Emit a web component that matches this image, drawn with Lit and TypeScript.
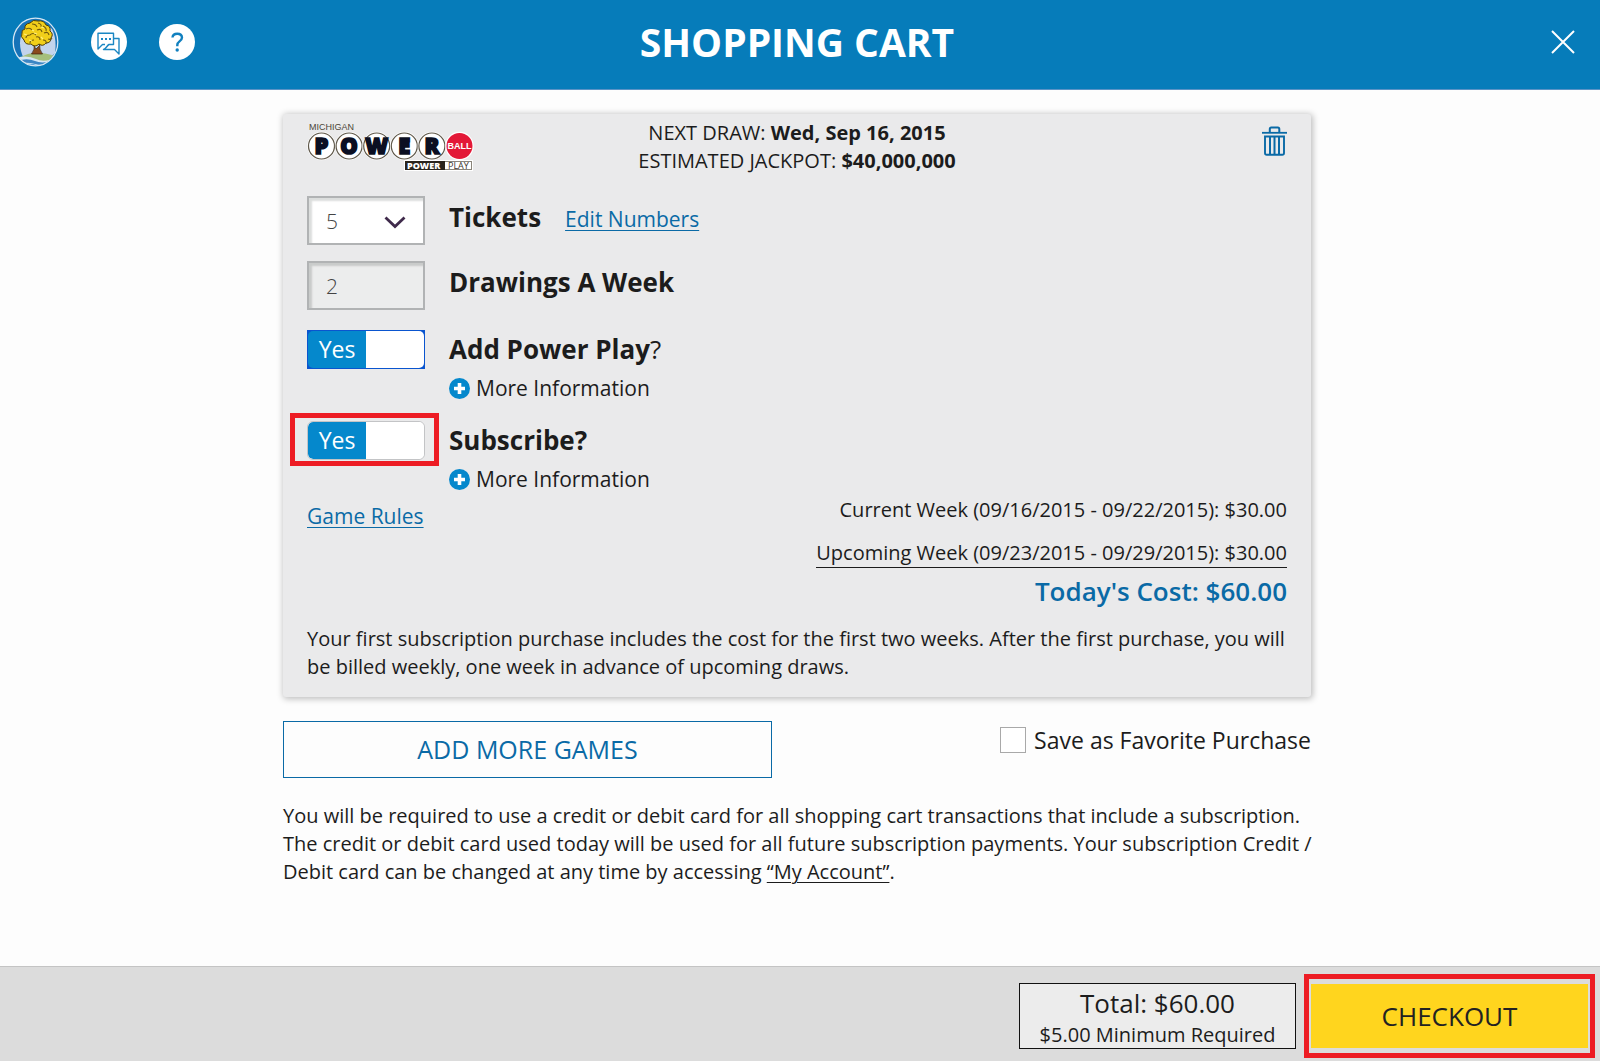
import { LitElement, html, css, svg } from "lit";
import { customElement, property, state } from "lit/decorators.js";
import { classMap } from "lit/directives/class-map.js";

/** Yes/No switch drawn as a two-part slider. */
@customElement("yes-toggle")
class YesToggle extends LitElement {
  @property() label = "";
  @property({ type: Boolean }) checked = true;
  @property({ type: Boolean }) focused = false;

  static styles = css`
    :host {
      display: block;
    }
    .toggle {
      position: relative;
      display: flex;
      box-sizing: border-box;
      height: 39px;
      border: 1px solid #c3c4c6;
      border-radius: 6px;
      background: #fff;
      overflow: hidden;
      cursor: pointer;
    }
    .toggle.focused {
      border-radius: 0;
      border-color: #0a55cf;
      background: #0a55cf;
    }
    .input {
      position: absolute;
      inset: 0;
      width: 100%;
      height: 100%;
      margin: 0;
      opacity: 0;
      cursor: pointer;
    }
    .side {
      flex: 1;
      text-align: center;
      font-size: 23px;
      line-height: 36px;
      background: #fff;
      border-radius: 0 5px 5px 0;
    }
    .side.on {
      background: #0588cc;
      color: #fff;
      border-radius: 5px 0 0 5px;
    }
  `;

  private flip(e: Event) {
    this.checked = (e.target as HTMLInputElement).checked;
  }

  render() {
    return html`
      <label class=${classMap({ toggle: true, focused: this.focused })}>
        <input class="input" type="checkbox" role="switch" aria-label=${this.label} .checked=${this.checked} @change=${this.flip} />
        <span class=${classMap({ side: true, on: this.checked })}>${this.checked ? "Yes" : ""}</span>
        <span class="side">${this.checked ? "" : "No"}</span>
      </label>
    `;
  }
}

/** Powerball game logo: five lettered balls, a red one and the Power Play strip. */
@customElement("powerball-logo")
class PowerballLogo extends LitElement {
  static styles = css`
    :host {
      display: block;
      line-height: 0;
    }
    .letter {
      font: 800 22px "Open Sans", sans-serif;
      fill: #0b0f22;
      stroke: #0b0f22;
      stroke-width: 1.6;
      text-anchor: middle;
    }
    .ball {
      font: bold 9px "Liberation Sans", sans-serif;
      fill: #fff;
      text-anchor: middle;
    }
    .state {
      font: 9px "Liberation Sans", sans-serif;
      fill: #4c4638;
    }
    .power {
      font: 800 9px "Open Sans", sans-serif;
      fill: #fff;
    }
    .play {
      font: 9px "Open Sans", sans-serif;
      fill: #3a352b;
    }
  `;

  render() {
    return html`
      <svg width="168" height="50" viewBox="0 0 168 50" role="img" aria-label="Michigan Powerball Power Play">
        <text class="state" x="2" y="8">MICHIGAN</text>
        ${["P", "O", "W", "E", "R"].map((c, i) => {
          const x = 14.5 + i * 27.6;
          return svg`
            <circle cx=${x} cy="24" r="14.2" fill="#fff"/>
            <circle cx=${x} cy="24" r="13" fill="#fff" stroke="#5f584a" stroke-width="1.2"/>
            <text class="letter" x=${x} y="32">${c}</text>`;
        })}
        <circle cx="152.5" cy="24" r="14.2" fill="#fff" />
        <circle cx="152.5" cy="24" r="13" fill="#e31837" />
        <text class="ball" x="152.5" y="27">BALL</text>
        <rect x="97" y="38" width="69" height="11" fill="#fff" />
        <rect x="98" y="39" width="67" height="9" fill="#8a857a" />
        <rect x="98" y="39" width="40" height="9" fill="#2a241c" />
        <rect x="138" y="40" width="26" height="7" fill="#fff" />
        <text class="power" x="100" y="47">POWER</text>
        <text class="play" x="141" y="47">PLAY</text>
      </svg>
    `;
  }
}

@customElement("app-root")
class AppRoot extends LitElement {
  @state() private tickets = "5";

  static styles = css`
    :host {
      display: flex;
      flex-direction: column;
      min-height: 100vh;
      background: #fdfdfd;
      color: #1c1c1c;
      font-family: "Open Sans", "Noto Sans", sans-serif;
      font-size: 20px;
      line-height: 28px;
    }
    button {
      font-family: inherit;
      cursor: pointer;
    }
    a {
      color: #0a6aa6;
      text-decoration-thickness: 1px;
      text-underline-offset: 3px;
    }
    p {
      margin: 0;
    }
    svg {
      display: block;
    }

    .topbar {
      display: grid;
      grid-template-columns: 1fr auto 1fr;
      align-items: center;
      box-sizing: border-box;
      height: 90px;
      padding: 0 18px 6px 12px;
      background: #067cba;
      border-bottom: 1px solid #5a93c6;
    }
    .nav {
      display: flex;
      align-items: center;
      gap: 32px;
    }
    .title {
      margin: 0;
      color: #fff;
      font-size: 39px;
      line-height: 48px;
      font-weight: 700;
    }
    .close {
      justify-self: end;
      padding: 6px;
      border: 0;
      background: none;
    }

    .page {
      flex: 1;
      box-sizing: border-box;
      width: 100%;
      max-width: 1076px;
      margin: 0 auto;
      padding: 24px 27px 24px 21px;
    }
    .card {
      padding: 5px 24px 16px;
      background: #eaeaeb;
      border-radius: 3px;
      box-shadow: 1px 1px 6px 1px rgba(0, 0, 0, 0.25);
    }
    .card-head {
      display: grid;
      grid-template-columns: 1fr auto 1fr;
      align-items: start;
      margin-bottom: 21px;
    }
    .logo {
      padding-top: 3px;
    }
    .draw {
      text-align: center;
    }
    .trash {
      justify-self: end;
      margin-top: 7px;
      padding: 0;
      border: 0;
      background: none;
    }

    .row {
      display: grid;
      grid-template-columns: 118px 1fr;
      column-gap: 24px;
      align-items: start;
      margin-bottom: 16px;
    }
    .row.option {
      margin: 20px 0;
    }
    .row.last {
      margin: 19px 0 3px;
    }
    .row.first-option {
      margin-bottom: 19px;
    }
    .name {
      font-size: 26px;
      line-height: 42px;
      font-weight: 700;
    }
    .option .name {
      line-height: 39px;
    }
    .plain {
      font-weight: 400;
    }
    .named {
      display: flex;
      align-items: baseline;
      gap: 24px;
    }
    .link {
      font-size: 21px;
    }
    .select-box {
      position: relative;
    }
    .field {
      box-sizing: border-box;
      display: block;
      width: 100%;
      height: 49px;
      padding: 0 17px;
      border: 2px solid #b1b3b4;
      border-radius: 0;
      background: #fff;
      box-shadow: inset 3px 3px 2px #dcdedd;
      color: #444;
      font-family: inherit;
      font-size: 21px;
      font-weight: 300;
      appearance: none;
    }
    .field.fixed {
      background: #eceded;
      box-shadow: inset 3px 3px 2px #c9cbca;
    }
    .chevron {
      position: absolute;
      right: 19px;
      top: 20px;
      pointer-events: none;
    }
    .more {
      display: flex;
      align-items: center;
      gap: 6px;
      padding: 0;
      margin-top: 5px;
      border: 0;
      background: none;
      color: inherit;
      font-size: 21px;
      line-height: 28px;
    }
    .marked {
      position: relative;
    }
    .marked::after {
      content: "";
      position: absolute;
      inset: -8px -14px -6px -17px;
      border: 5px solid #ed1c24;
      pointer-events: none;
    }

    .summary {
      display: flex;
      justify-content: space-between;
      align-items: start;
      margin-bottom: 16px;
    }
    .summary .link {
      margin-top: 6px;
    }
    .costs {
      display: flex;
      flex-direction: column;
      align-items: flex-end;
    }
    .upcoming {
      margin-top: 15px;
      border-bottom: 1px solid #1c1c1c;
    }
    .today {
      margin-top: 5px;
      color: #0a6aa6;
      font-size: 26px;
      line-height: 36px;
      font-weight: 600;
    }

    .actions {
      display: flex;
      justify-content: space-between;
      align-items: start;
      margin: 24px 0;
    }
    .add {
      box-sizing: border-box;
      width: calc(50% - 25px);
      height: 57px;
      padding: 0 0 2px;
      border: 1px solid #0a6aa6;
      background: none;
      color: #0a6aa6;
      font-size: 25px;
    }
    .favorite {
      display: flex;
      align-items: center;
      gap: 8px;
      margin-top: 4px;
      font-size: 23px;
      line-height: 30px;
    }
    .check {
      box-sizing: border-box;
      width: 26px;
      height: 26px;
      margin: 0;
      border: 1px solid #a9a9a9;
      background: #fff;
      appearance: none;
    }
    .notice {
      margin-right: -12px;
    }
    .account {
      color: inherit;
    }

    .footer {
      display: flex;
      justify-content: flex-end;
      align-items: center;
      gap: 8px;
      box-sizing: border-box;
      height: 95px;
      padding: 4px 5px 0;
      background: #dcdcdc;
      border-top: 1px solid #c4c4c4;
    }
    .total {
      box-sizing: border-box;
      width: 277px;
      height: 66px;
      border: 1px solid #111;
      background: #ececec;
      text-align: center;
      line-height: 26px;
    }
    .sum {
      font-size: 26px;
      line-height: 38px;
    }
    .pay {
      box-sizing: border-box;
      width: 291px;
      height: 84px;
      padding: 5px 2px;
      border: 5px solid #ed1c24;
    }
    .checkout {
      width: 100%;
      height: 100%;
      padding: 0;
      border: 0;
      background: #ffd51e;
      color: #222;
      font-size: 26px;
    }
  `;

  private onTickets(e: Event) {
    this.tickets = (e.target as HTMLSelectElement).value;
  }

  private moreInfo() {
    return html`
      <button class="more" type="button">
        <svg width="21" height="21" viewBox="0 0 21 21" aria-hidden="true">
          <circle cx="10.5" cy="10.5" r="10.5" fill="#0588cc" />
          <path d="M10.5 5v11M5 10.5h11" stroke="#fff" stroke-width="3.6" />
        </svg>
        More Information
      </button>
    `;
  }

  private lotteryLogo() {
    return html`
      <svg width="47" height="50" viewBox="0 0 47 50" role="img" aria-label="Michigan Lottery home">
        <defs>
          <clipPath id="oval"><ellipse cx="23.5" cy="25" rx="22" ry="23.5" /></clipPath>
        </defs>
        <ellipse cx="23.5" cy="25" rx="22.3" ry="23.8" fill="#1673b8" />
        <g clip-path="url(#oval)">
          <path d="M12 12Q26 0 40 12q5 10 3 24l-6 6H12Q4 26 12 12z" fill="#c3d4ec" />
          <path d="M9 40q14-8 33-1l-4 9H7z" fill="#a5bf7c" />
          <path d="M0 42q14-5 24 0t23-4v12H0z" fill="#d7e8f5" />
          <path d="M2 45q12-5 21-1t24-3v3q-14 6-24 3t-21 1z" fill="#3c86c4" />
          <path d="M6 49q12-4 18-1t18-2v4H6z" fill="#5b9dd2" />
        </g>
        <path d="M22.5 26h5q-.5 7 3 11h-11q3.5-4 3-11zM20 26l4 6 7-7" fill="#8a4b1d" stroke="#3c230f" stroke-width=".7" />
        <path
          d="M13 12q-1-5 5-6 3-4 8-2 6-1 8 4 5 1 4 6 4 3 1 7 0 5-5 5-3 4-7 1-4 4-8 0-6 1-7-4-4-3-2-7-1-3 3-4z"
          fill="#f1cf1a" stroke="#4a3c0a" stroke-width="1" />
        <path
          d="M14 12q4-2 6 1m0-6q4 0 5 3m1-4q4 1 3 4m2-1q4 2 3 5m-16 4q3-3 6 0m1-5q4-2 5 2m2 1q4-2 5 2m-13 2q4-1 4 3m-10-5q-4 0-4 3m8 2q-4 0-4 3m13-3q4 0 3 4m2-5q3 1 4-1"
          fill="none" stroke="#715b0d" stroke-width="1.1" />
        <path d="M12 17l3 1m7-2l3 1m4-7l3 1m-15 12l3 1m9-4l2 2m-11-9l2 1" stroke="#fff07a" stroke-width="1.2" />
        <ellipse cx="23.5" cy="25" rx="22.3" ry="23.8" fill="none" stroke="#d5e6f3" stroke-width="1.3" />
      </svg>
    `;
  }

  render() {
    return html`
      <header class="topbar">
        <nav class="nav" aria-label="Site">
          <a href="#home">${this.lotteryLogo()}</a>
          <a href="#chat" aria-label="Chat">
            <svg width="36" height="36" viewBox="0 0 36 36" aria-hidden="true">
              <circle cx="18" cy="18" r="18" fill="#fff" />
              <g fill="none" stroke="#1b87c3" stroke-width="1.4" stroke-linejoin="round">
                <path d="M22.5 14V9.200H7V25l4.500-4.500H14" />
                <path d="M22.5 14.5H28V30l-4.500-4.500H12.500c2.500-.5 3.500-4 5.500-5h4.500z" />
              </g>
              <path d="M10 15h2m2 0h2m2 0h2" stroke="#1b87c3" stroke-width="2" />
            </svg>
          </a>
          <a href="#help" aria-label="Help">
            <svg width="36" height="36" viewBox="0 0 36 36" aria-hidden="true">
              <circle cx="18" cy="18" r="18" fill="#fff" />
              <path d="M13.5 13.5q.3-3.700 4.800-3.700t4.700 3.700q0 2-2.500 3.900-2.200 1.700-2.200 3.600v1.200" fill="none" stroke="#1180bf" stroke-width="2.4" />
              <circle cx="18.2" cy="26" r="1.7" fill="#1180bf" />
            </svg>
          </a>
        </nav>
        <h1 class="title">SHOPPING CART</h1>
        <button class="close" type="button" aria-label="Close">
          <svg width="26" height="26" viewBox="0 0 26 26" aria-hidden="true">
            <path d="M2 2l22 22M24 2L2 24" stroke="#fff" stroke-width="2" />
          </svg>
        </button>
      </header>

      <main class="page">
        <section class="card">
          <div class="card-head">
            <powerball-logo class="logo"></powerball-logo>
            <div class="draw">
              <p>NEXT DRAW: <b>Wed, Sep 16, 2015</b></p>
              <p>ESTIMATED JACKPOT: <b>$40,000,000</b></p>
            </div>
            <button class="trash" type="button" aria-label="Remove game">
              <svg width="25" height="30" viewBox="0 0 25 30" fill="none" stroke="#0a6aa6" aria-hidden="true">
                <path d="M0 6.800h25" stroke-width="1.8" />
                <path d="M7.800 6V3q0-1.500 1.500-1.500h6.500Q17.300 1.500 17.300 3v3" stroke-width="2" />
                <path d="M3 10.500h19v16.500q0 1.800-1.800 1.800H4.800Q3 28.800 3 27z" stroke-width="1.9" />
                <path d="M8 10v19M12.500 10v19M17 10v19" stroke-width="2" />
              </svg>
            </button>
          </div>

          <div class="row">
            <div class="select-box">
              <select id="tickets" class="field" .value=${this.tickets} @change=${this.onTickets}>
                ${["1", "2", "3", "4", "5"].map((n) => html`<option value=${n} ?selected=${n === this.tickets}>${n}</option>`)}
              </select>
              <svg class="chevron" width="22" height="13" viewBox="0 0 22 13" aria-hidden="true">
                <path d="M1.500 1.500L11 10.500l9.500-9" fill="none" stroke="#3f2a4b" stroke-width="2.8" />
              </svg>
            </div>
            <div class="named">
              <label class="name" for="tickets">Tickets</label>
              <a class="link" href="#numbers">Edit Numbers</a>
            </div>
          </div>

          <div class="row">
            <input id="drawings" class="field fixed" type="text" value="2" readonly />
            <label class="name" for="drawings">Drawings A Week</label>
          </div>

          <div class="row option first-option">
            <yes-toggle label="Add Power Play" focused></yes-toggle>
            <div>
              <div class="name">Add Power Play<span class="plain">?</span></div>
              ${this.moreInfo()}
            </div>
          </div>

          <div class="row option last">
            <div class="marked"><yes-toggle label="Subscribe"></yes-toggle></div>
            <div>
              <div class="name">Subscribe?</div>
              ${this.moreInfo()}
            </div>
          </div>

          <div class="summary">
            <a class="link" href="#rules">Game Rules</a>
            <div class="costs">
              <p>Current Week (09/16/2015 - 09/22/2015): $30.00</p>
              <p class="upcoming">Upcoming Week (09/23/2015 - 09/29/2015): $30.00</p>
              <p class="today">Today's Cost: $60.00</p>
            </div>
          </div>

          <p>
            Your first subscription purchase includes the cost for the first two weeks. After the first purchase, you will
            be billed weekly, one week in advance of upcoming draws.
          </p>
        </section>

        <div class="actions">
          <button class="add" type="button">ADD MORE GAMES</button>
          <label class="favorite"><input class="check" type="checkbox" />Save as Favorite Purchase</label>
        </div>

        <p class="notice">
          You will be required to use a credit or debit card for all shopping cart transactions that include a subscription.
          The credit or debit card used today will be used for all future subscription payments. Your subscription Credit /
          Debit card can be changed at any time by accessing <a class="account" href="#account">“My Account”</a>.
        </p>
      </main>

      <footer class="footer">
        <div class="total">
          <p class="sum">Total: $60.00</p>
          <p>$5.00 Minimum Required</p>
        </div>
        <div class="pay"><button class="checkout" type="button">CHECKOUT</button></div>
      </footer>
    `;
  }
}
